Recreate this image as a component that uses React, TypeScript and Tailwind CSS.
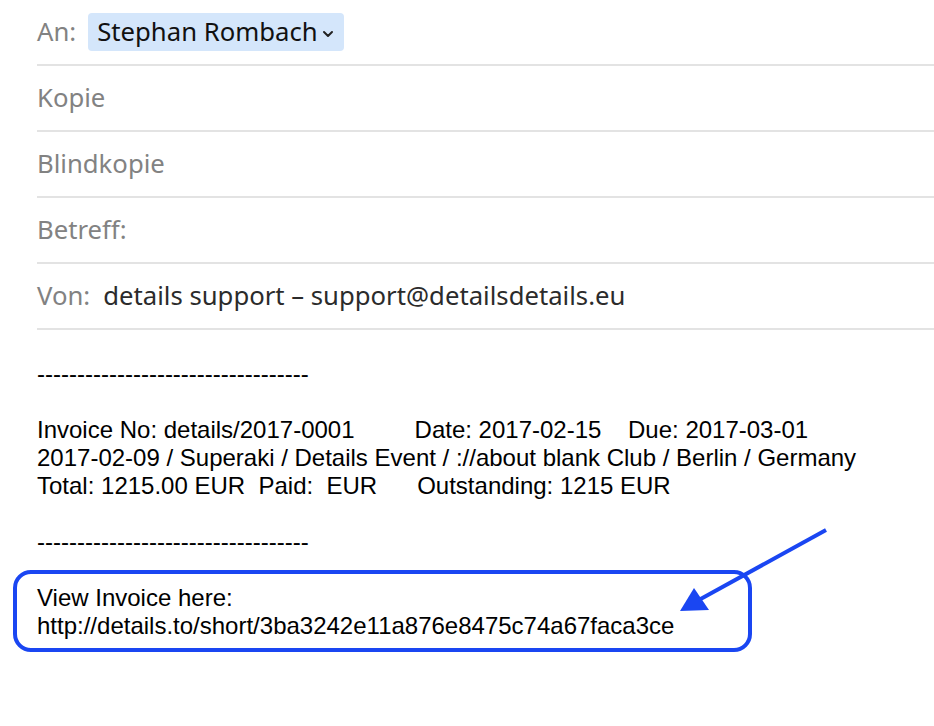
import React from "react";

const dashes = "----------------------------------";

function HeaderRow({ children }: { children: React.ReactNode }) {
  return (
    <div className="ml-[37px] h-[66px] border-b-2 border-[#e3e3e3] flex items-center">
      {children}
    </div>
  );
}

export default function App() {
  return (
    <div className="relative w-[934px] h-[726px] bg-white overflow-hidden">
      <div className="flex flex-col text-[25.7px] text-[#828282]" style={{ fontFamily: '"Noto Sans", "Liberation Sans", sans-serif' }}>
        <HeaderRow>
          <span>An:</span>
          <span className="ml-[12px] flex items-center h-[38px] rounded-[4px] bg-[#d4e6fb] pl-[9px] pr-[10px] text-[#111]">
            Stephan Rombach
            <svg width="12" height="8" viewBox="0 0 12 8" className="ml-[4px] mt-[3px]">
              <path d="M2 2 L6 6 L10 2" fill="none" stroke="#222" strokeWidth="2" strokeLinecap="round" strokeLinejoin="round" />
            </svg>
          </span>
        </HeaderRow>
        <HeaderRow>
          <span>Kopie</span>
        </HeaderRow>
        <HeaderRow>
          <span>Blindkopie</span>
        </HeaderRow>
        <HeaderRow>
          <span>Betreff:</span>
        </HeaderRow>
        <HeaderRow>
          <span>Von:</span>
          <span className="ml-[13px] text-[#2b2b2b]">details support – support@detailsdetails.eu</span>
        </HeaderRow>
      </div>

      <div
        className="mt-[30px] ml-[37px] text-[24px] leading-[28px] text-black whitespace-pre"
        style={{ fontFamily: '"Liberation Sans", Arial, sans-serif' }}
      >
        <div>{dashes}</div>
        <div>&nbsp;</div>
        <div>{"Invoice No: details/2017-0001         Date: 2017-02-15    Due: 2017-03-01"}</div>
        <div>2017-02-09 / Superaki / Details Event / ://about blank Club / Berlin / Germany</div>
        <div>{"Total: 1215.00 EUR  Paid:  EUR      Outstanding: 1215 EUR"}</div>
        <div>&nbsp;</div>
        <div>{dashes}</div>
        <div>&nbsp;</div>
        <div>View Invoice here:</div>
        <div>http://details.to/short/3ba3242e11a876e8475c74a67faca3ce</div>
      </div>

      <div className="absolute left-[13px] top-[570px] w-[739px] h-[82px] rounded-[18px] border-[4px] border-[#1a46f2]" />
      <svg className="absolute left-0 top-0" width="934" height="726" viewBox="0 0 934 726">
        <line x1="826" y1="530" x2="697" y2="601" stroke="#1a46f2" strokeWidth="4" />
        <polygon points="680,611 694,588 709,610" fill="#1a46f2" />
      </svg>
    </div>
  );
}
